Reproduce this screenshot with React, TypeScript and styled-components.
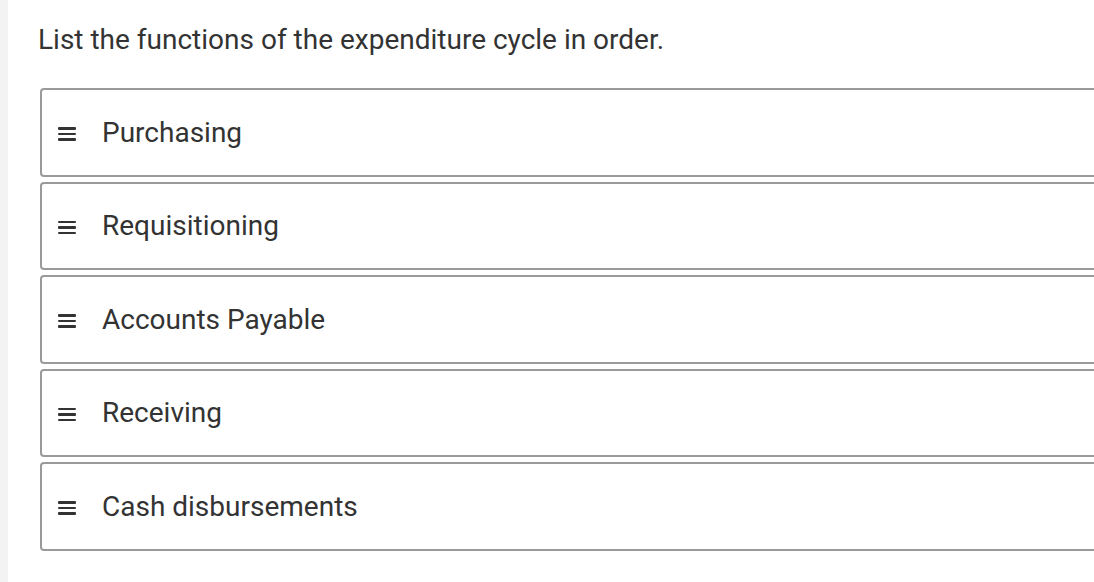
import React from "react";
import styled, { createGlobalStyle } from "styled-components";

const GlobalStyle = createGlobalStyle`
  html, body {
    margin: 0;
    padding: 0;
    background: #ffffff;
    overflow: hidden;
  }
  body {
    font-family: Roboto, "Liberation Sans", sans-serif;
    color: #333333;
  }
`;

// --- page frame ---
const Page = styled.div`
  display: flex;
  width: 1094px;
  height: 582px;
  overflow: hidden;
`;

const SideStrip = styled.div`
  width: 8px;
  flex-shrink: 0;
  background-color: #f3f3f3;
`;

const Content = styled.div`
  flex: 1;
  padding: 22px 0 0 30px;
  min-width: 0;
`;

const Question = styled.h1`
  margin: 0 0 30px 0;
  font-size: 28px;
  font-weight: 400;
  line-height: 36px;
  color: #333333;
`;

// --- sortable list ---
const List = styled.ol`
  list-style: none;
  margin: 0;
  padding: 0 0 0 2px;
  display: flex;
  flex-direction: column;
  gap: 5px;
`;

const Item = styled.li`
  width: 1100px;
  height: 88.5px;
  box-sizing: border-box;
  border: 2px solid #9a9a9a;
  border-radius: 4px;
  background: #ffffff;
  display: flex;
  align-items: center;
  padding-left: 16px;
  gap: 26px;
  font-size: 28px;
  color: #333333;
`;

const Handle = styled.span`
  display: flex;
  flex-direction: column;
  gap: 3px;
  width: 18px;
  margin-top: 3px;

  i {
    display: block;
    height: 2.5px;
    background: #333333;
    border-radius: 1px;
  }
`;

const steps = [
  "Purchasing",
  "Requisitioning",
  "Accounts Payable",
  "Receiving",
  "Cash disbursements",
];

export default function App() {
  return (
    <>
      <GlobalStyle />
      <Page>
        <SideStrip />
        <Content>
          <Question>List the functions of the expenditure cycle in order.</Question>
          <List>
            {steps.map((s) => (
              <Item key={s}>
                <Handle>
                  <i />
                  <i />
                  <i />
                </Handle>
                {s}
              </Item>
            ))}
          </List>
        </Content>
      </Page>
    </>
  );
}
